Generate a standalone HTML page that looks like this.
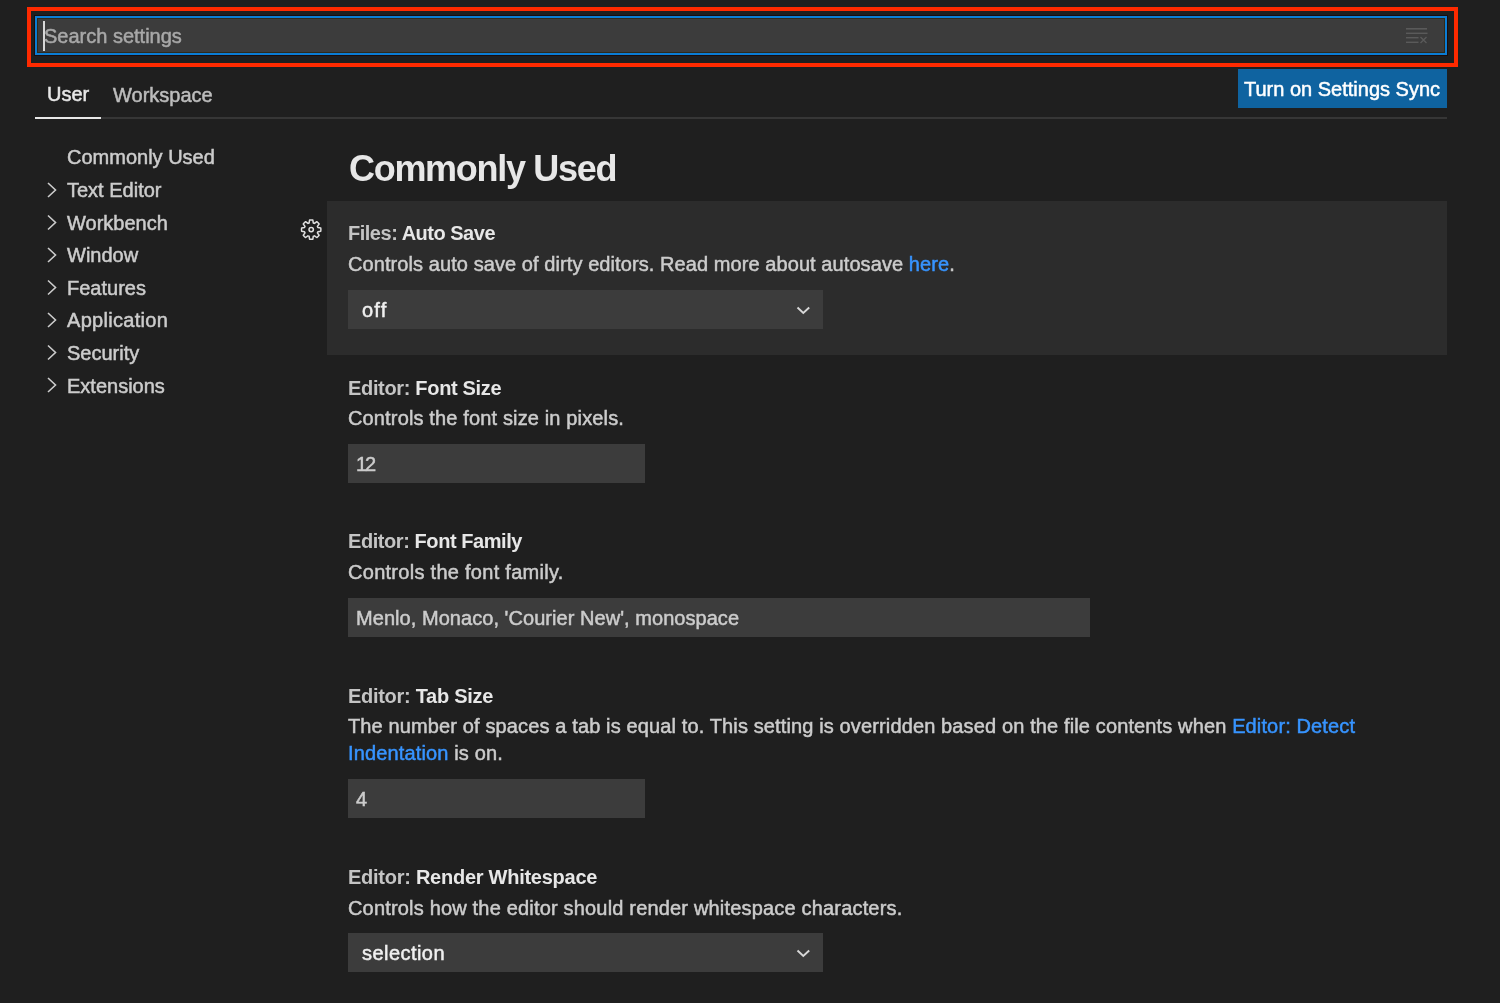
<!DOCTYPE html>
<html><head><meta charset="utf-8">
<style>
html,body{margin:0;padding:0;}
body{width:1500px;height:1003px;overflow:hidden;background:#1f1f1f;position:relative;font-family:"Liberation Sans",sans-serif;}
.a{position:absolute;white-space:pre;}
.t{font-size:20px;line-height:26px;color:#cccccc;-webkit-text-stroke:0.5px currentColor;will-change:transform;}
.red{left:27px;top:7px;width:1423px;height:52px;border:4px solid #ff2a00;}
.search{left:35px;top:16px;width:1408px;height:35px;background:#3c3c3c;border:2px solid #0b7dd4;box-shadow:inset 0 0 0 1px #2f2a1c, 0 0 0 1px #1a0d0d;}
.cursor{left:43px;top:21px;width:2px;height:30px;background:#d8d8d8;}
.btn{left:1238px;top:69px;width:209px;height:39px;background:#0f63a0;}
.sep{left:35px;top:117px;width:1412px;height:2px;background:#363636;}
.uline{left:35px;top:117px;width:66px;height:2px;background:#e7e7e7;}
.nav{color:#cccccc;}
.chev{left:47px;width:11px;height:16px;}
.h1{will-change:transform;font-size:36px;line-height:44px;font-weight:700;color:#e7e7e7;letter-spacing:-1.3px;}
.row{left:327px;top:201px;width:1120px;height:154px;background:#2c2c2c;}
.title{font-weight:700;letter-spacing:-0.35px;-webkit-text-stroke:0px;}
.cat{color:#c4c4c4;}
.lab{color:#e7e7e7;}
.inp{background:#3c3c3c;}
.link{color:#3794ff;}
</style></head><body>

<div class="a red"></div>
<div class="a search"></div>
<div class="a cursor"></div>
<div class="a t" style="left:44px;top:23px;color:#a8a8a8;">Search settings</div>
<svg class="a" style="left:1404px;top:26px" width="26" height="19" viewBox="0 0 26 19">
  <g fill="#5a5a5a">
    <rect x="2" y="2" width="21" height="1.6"/>
    <rect x="2" y="6.6" width="21.5" height="1.4"/>
    <rect x="2" y="11" width="12.5" height="1.4"/>
    <rect x="2" y="15.6" width="12.5" height="1.4"/>
  </g>
  <path d="M16.5 11 L22.5 17 M22.5 11 L16.5 17" stroke="#5a5a5a" stroke-width="1.4" fill="none"/>
</svg>

<div class="a t" style="left:47px;top:81px;color:#e7e7e7;">User</div>
<div class="a t" style="left:113px;top:82px;color:#bdbdbd;">Workspace</div>
<div class="a sep"></div>
<div class="a uline"></div>

<div class="a btn"></div>
<div class="a t" style="left:1244px;top:76px;color:#ffffff;">Turn on Settings Sync</div>

<!-- nav -->
<div class="a t nav" style="left:67px;top:144px;">Commonly Used</div>
<div class="a t nav" style="left:67px;top:177px;">Text Editor</div>
<div class="a t nav" style="left:67px;top:210px;">Workbench</div>
<div class="a t nav" style="left:67px;top:242px;">Window</div>
<div class="a t nav" style="left:67px;top:275px;">Features</div>
<div class="a t nav" style="left:67px;top:307px;letter-spacing:0.3px;">Application</div>
<div class="a t nav" style="left:67px;top:340px;">Security</div>
<div class="a t nav" style="left:67px;top:373px;">Extensions</div>
<svg class="a" style="left:0;top:0" width="70" height="420">
  <g stroke="#cccccc" stroke-width="1.6" fill="none">
    <path d="M48 183 L55.5 190 L48 197"/>
    <path d="M48 215.5 L55.5 222.5 L48 229.5"/>
    <path d="M48 248 L55.5 255 L48 262"/>
    <path d="M48 280.5 L55.5 287.5 L48 294.5"/>
    <path d="M48 313 L55.5 320 L48 327"/>
    <path d="M48 345.5 L55.5 352.5 L48 359.5"/>
    <path d="M48 378 L55.5 385 L48 392"/>
  </g>
</svg>

<!-- main -->
<div class="a h1" style="left:349px;top:147px;">Commonly Used</div>

<div class="a row"></div>
<svg class="a" style="left:299px;top:218px" width="24" height="24" viewBox="-0.2 0.4 24 24">
  <path d="M9.93 5.31 L10.36 2.44 A9.70 9.70 0 0 1 13.64 2.44 L14.07 5.31 A7.00 7.00 0 0 1 15.27 5.81 L17.60 4.08 A9.70 9.70 0 0 1 19.92 6.40 L18.19 8.73 A7.00 7.00 0 0 1 18.69 9.93 L21.56 10.36 A9.70 9.70 0 0 1 21.56 13.64 L18.69 14.07 A7.00 7.00 0 0 1 18.19 15.27 L19.92 17.60 A9.70 9.70 0 0 1 17.60 19.92 L15.27 18.19 A7.00 7.00 0 0 1 14.07 18.69 L13.64 21.56 A9.70 9.70 0 0 1 10.36 21.56 L9.93 18.69 A7.00 7.00 0 0 1 8.73 18.19 L6.40 19.92 A9.70 9.70 0 0 1 4.08 17.60 L5.81 15.27 A7.00 7.00 0 0 1 5.31 14.07 L2.44 13.64 A9.70 9.70 0 0 1 2.44 10.36 L5.31 9.93 A7.00 7.00 0 0 1 5.81 8.73 L4.08 6.40 A9.70 9.70 0 0 1 6.40 4.08 L8.73 5.81 A7.00 7.00 0 0 1 9.93 5.31 Z" fill="none" stroke="#e0e0e0" stroke-width="1.5" stroke-linejoin="round"/>
  <circle cx="12" cy="12" r="2.2" fill="none" stroke="#e0e0e0" stroke-width="1.5"/>
</svg>

<div class="a t title" style="left:348px;top:220px;letter-spacing:-0.49px;"><span class="cat">Files: </span><span class="lab">Auto Save</span></div>
<div class="a t" style="left:348px;top:251px;letter-spacing:0.08px;">Controls auto save of dirty editors. Read more about autosave <span class="link">here</span>.</div>
<div class="a inp" style="left:348px;top:290px;width:475px;height:39px;"></div>
<div class="a t" style="left:362px;top:297px;color:#f0f0f0;letter-spacing:1.2px;">off</div>
<svg class="a" style="left:794px;top:303px" width="18" height="14"><path d="M3.5 4.5 L9.3 10 L15.2 4.5" stroke="#d8d8d8" stroke-width="1.9" fill="none"/></svg>

<div class="a t title" style="left:348px;top:375px;letter-spacing:-0.33px;"><span class="cat">Editor: </span><span class="lab">Font Size</span></div>
<div class="a t" style="left:348px;top:405px;letter-spacing:0.145px;">Controls the font size in pixels.</div>
<div class="a inp" style="left:348px;top:444px;width:297px;height:39px;"></div>
<div class="a t" style="left:356px;top:451px;letter-spacing:-2px;">12</div>

<div class="a t title" style="left:348px;top:528px;letter-spacing:-0.43px;"><span class="cat">Editor: </span><span class="lab">Font Family</span></div>
<div class="a t" style="left:348px;top:559px;letter-spacing:0.28px;">Controls the font family.</div>
<div class="a inp" style="left:348px;top:598px;width:742px;height:39px;"></div>
<div class="a t" style="left:356px;top:605px;letter-spacing:0.05px;">Menlo, Monaco, 'Courier New', monospace</div>

<div class="a t title" style="left:348px;top:683px;letter-spacing:-0.29px;"><span class="cat">Editor: </span><span class="lab">Tab Size</span></div>
<div class="a t" style="left:348px;top:713px;letter-spacing:0.13px;">The number of spaces a tab is equal to. This setting is overridden based on the file contents when <span class="link">Editor: Detect</span></div>
<div class="a t" style="left:348px;top:740px;letter-spacing:0.14px;"><span class="link">Indentation</span> is on.</div>
<div class="a inp" style="left:348px;top:779px;width:297px;height:39px;"></div>
<div class="a t" style="left:356px;top:786px;">4</div>

<div class="a t title" style="left:348px;top:864px;letter-spacing:-0.26px;"><span class="cat">Editor: </span><span class="lab">Render Whitespace</span></div>
<div class="a t" style="left:348px;top:895px;letter-spacing:0.18px;">Controls how the editor should render whitespace characters.</div>
<div class="a inp" style="left:348px;top:933px;width:475px;height:39px;"></div>
<div class="a t" style="left:362px;top:940px;color:#f0f0f0;letter-spacing:0.45px;">selection</div>
<svg class="a" style="left:794px;top:946px" width="18" height="14"><path d="M3.5 4.5 L9.3 10 L15.2 4.5" stroke="#d8d8d8" stroke-width="1.9" fill="none"/></svg>

</body></html>
